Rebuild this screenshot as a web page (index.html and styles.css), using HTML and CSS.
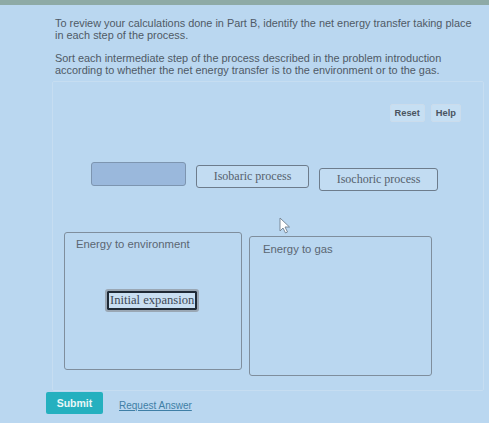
FILE: index.html
```html
<!DOCTYPE html>
<html>
<head>
<meta charset="utf-8">
<link rel="stylesheet" href="styles.css">
</head>
<body>
<div class="topbar"></div>
<div class="content">
  <p class="intro">To review your calculations done in Part B, identify the net energy transfer taking place in each step of the process.</p>
  <p class="intro second">Sort each intermediate step of the process described in the problem introduction according to whether the net energy transfer is to the environment or to the gas.</p>
  <div class="panel">
    <div class="tools">
      <span class="btn">Reset</span>
      <span class="btn">Help</span>
    </div>
    <div class="tokens">
      <span class="slot"></span>
      <span class="token">Isobaric process</span>
      <span class="token wide">Isochoric process</span>
    </div>
    <div class="zones">
      <div class="zone left">
        <div class="zone-label">Energy to environment</div>
        <div class="zone-body">
          <span class="token placed">Initial expansion</span>
        </div>
      </div>
      <div class="zone right">
        <div class="zone-label">Energy to gas</div>
      </div>
    </div>
    <svg class="cursor" width="12" height="17" viewBox="0 0 12 17"><path d="M1 1 L1 14 L4 11 L6.5 16 L8.5 15 L6 10 L10.5 10 Z" fill="#ffffff" stroke="#6f7f8f" stroke-width="0.9"/></svg>
  </div>
  <div class="actions">
    <span class="submit">Submit</span>
    <span class="link">Request Answer</span>
  </div>
</div>
</body>
</html>
```
FILE: styles.css
```css
html, body {
  margin: 0;
  padding: 0;
}
body {
  width: 489px;
  height: 423px;
  overflow: hidden;
  background: #bad7f0;
  font-family: "Liberation Sans", Arial, sans-serif;
  color: #4f5a66;
}
.topbar {
  height: 5px;
  background: #8eaaa6;
}
.content {
  padding-left: 46px;
}
.intro {
  margin: 12px 0 0 9px;
  width: 424px;
  font-size: 10.9px;
  line-height: 12px;
}
.second {
  margin-top: 11px;
}
.panel {
  position: relative;
  margin: 5px 0 0 6px;
  width: 432px;
  height: 310px;
  border: 1px solid #c6ddf1;
  border-radius: 2px;
  box-sizing: border-box;
}
.tools {
  display: flex;
  justify-content: flex-end;
  gap: 6px;
  padding: 22px 22px 0 0;
}
.btn {
  font-size: 9.3px;
  font-weight: bold;
  color: #4a5460;
  border: 1px solid #cbdcec;
  background: #c6dff3;
  border-radius: 2px;
  padding: 3px 4px;
  line-height: 10px;
}
.tokens {
  display: flex;
  gap: 10px;
  padding: 40px 0 0 38px;
  align-items: flex-start;
}
.slot {
  width: 95px;
  height: 24px;
  background: #9ab8dc;
  border: 1px solid #7d95b0;
  border-radius: 3px;
  box-sizing: border-box;
}
.token {
  font-family: "Liberation Serif", "Times New Roman", serif;
  font-size: 12px;
  color: #56616d;
  border: 1.5px solid #6d7c8c;
  border-radius: 3px;
  background: #c2dcf2;
  box-sizing: border-box;
  height: 23px;
  line-height: 20px;
  text-align: center;
  width: 113px;
  margin-top: 3px;
}
.token.wide {
  width: 119px;
  margin-top: 6px;
}
.zones {
  display: flex;
  gap: 7px;
  padding: 41px 0 0 11px;
}
.zone {
  border: 1.5px solid #7f8e9d;
  border-radius: 3px;
  box-sizing: border-box;
  width: 178px;
  height: 138px;
}
.zone.right {
  width: 183px;
  height: 140px;
  margin-top: 4px;
}
.zone-label {
  font-size: 11.3px;
  color: #5b6672;
  padding: 5px 0 0 11px;
}
.zone.right .zone-label {
  padding-top: 6px;
  padding-left: 13px;
}
.zone-body {
  padding: 40px 0 0 42px;
}
.token.placed {
  display: inline-block;
  width: auto;
  height: auto;
  margin: 0;
  padding: 1px 1px;
  line-height: 13px;
  border: 2px solid #1f2a36;
  outline: 2px solid #9aa7b4;
  color: #3e4956;
  background: #c9dff2;
  font-size: 12.6px;
  border-radius: 1px;
}
.cursor {
  position: absolute;
  left: 226px;
  top: 135px;
}
.actions {
  display: flex;
  align-items: center;
  gap: 16px;
  margin-top: 1px;
}
.submit {
  background: #25b0bf;
  color: #eaf7f8;
  font-size: 10.5px;
  font-weight: bold;
  width: 57px;
  height: 22px;
  line-height: 22px;
  text-align: center;
  border-radius: 2px;
}
.link {
  color: #3f7fa6;
  font-size: 10px;
  text-decoration: underline;
  margin-top: 5px;
}
```
